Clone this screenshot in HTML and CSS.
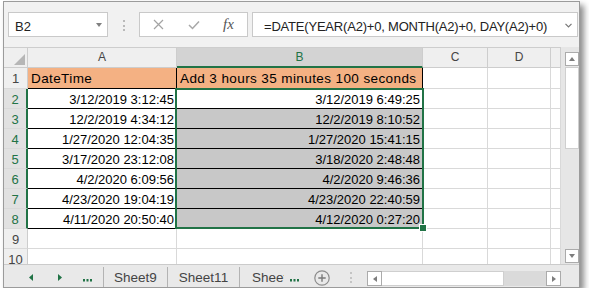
FILE: index.html
```html
<!DOCTYPE html>
<html>
<head>
  <title>Add hours minutes seconds</title>
  <link rel="stylesheet" href="styles.css">
</head>
<body>
  <div class="window">
    <div class="toolbar">
      <div class="namebox"><span>B2</span><span class="caret"></span></div>
      <div class="grip"><i></i><i></i><i></i></div>
      <div class="fxbox">
        <svg class="cancel" width="11" height="11" viewBox="0 0 11 11"><path d="M1 1L10 10M10 1L1 10" stroke="#a3a3a3" stroke-width="1.2" fill="none"/></svg>
        <svg class="enter" width="12" height="10" viewBox="0 0 12 10"><path d="M1 5L4.5 8.5L11 1.5" stroke="#a8a8a8" stroke-width="1.5" fill="none"/></svg>
        <span class="fx">fx</span>
      </div>
      <div class="formula">
        <span>=DATE(YEAR(A2)+0, MONTH(A2)+0, DAY(A2)+0)</span>
        <svg width="7" height="5" viewBox="0 0 7 5"><path d="M0.5 0.8L3.5 3.8L6.5 0.8" stroke="#777" stroke-width="1.2" fill="none"/></svg>
      </div>
    </div>

    <div class="sheet">
      <div class="grid">
        <div class="row head">
          <div class="corner"><svg width="11" height="11" viewBox="0 0 11 11"><path d="M11 0V11H0Z" fill="#b6b6b6"/></svg></div>
          <div>A</div>
          <div class="on">B</div>
          <div>C</div>
          <div>D</div>
          <div></div>
        </div>
        <div class="row row1">
          <div class="rh">1</div>
          <div class="dt title">DateTime</div>
          <div class="dt title">Add 3 hours 35 minutes 100 seconds</div>
          <div></div><div></div><div></div>
        </div>
        <div class="row">
          <div class="rh sel">2</div>
          <div class="dt num">3/12/2019 3:12:45</div>
          <div class="dt num">3/12/2019 6:49:25</div>
          <div></div><div></div><div></div>
        </div>
        <div class="row">
          <div class="rh sel">3</div>
          <div class="dt num">12/2/2019 4:34:12</div>
          <div class="dt num fill">12/2/2019 8:10:52</div>
          <div></div><div></div><div></div>
        </div>
        <div class="row">
          <div class="rh sel">4</div>
          <div class="dt num">1/27/2020 12:04:35</div>
          <div class="dt num fill">1/27/2020 15:41:15</div>
          <div></div><div></div><div></div>
        </div>
        <div class="row">
          <div class="rh sel">5</div>
          <div class="dt num">3/17/2020 23:12:08</div>
          <div class="dt num fill">3/18/2020 2:48:48</div>
          <div></div><div></div><div></div>
        </div>
        <div class="row">
          <div class="rh sel">6</div>
          <div class="dt num">4/2/2020 6:09:56</div>
          <div class="dt num fill">4/2/2020 9:46:36</div>
          <div></div><div></div><div></div>
        </div>
        <div class="row">
          <div class="rh sel">7</div>
          <div class="dt num">4/23/2020 19:04:19</div>
          <div class="dt num fill">4/23/2020 22:40:59</div>
          <div></div><div></div><div></div>
        </div>
        <div class="row">
          <div class="rh sel">8</div>
          <div class="dt num">4/11/2020 20:50:40</div>
          <div class="dt num fill">4/12/2020 0:27:20</div>
          <div></div><div></div><div></div>
        </div>
        <div class="row">
          <div class="rh">9</div>
          <div></div><div></div><div></div><div></div><div></div>
        </div>
        <div class="row">
          <div class="rh">10</div>
          <div></div><div></div><div></div><div></div><div></div>
        </div>

        <div class="selection"><span class="handle"></span></div>
      </div>

      <div class="vscroll">
        <div class="sbtn"><span class="tri up"></span></div>
        <div class="vthumb"></div>
        <div class="spacer"></div>
        <div class="sbtn"><span class="tri down"></span></div>
      </div>
    </div>

    <div class="tabbar">
      <div class="nav">
        <svg width="99" height="20" viewBox="0 0 99 20">
          <path d="M25 10.5L29 7V14Z" fill="#217346"/>
          <path d="M54 7V14L58 10.5Z" fill="#217346"/>
          <rect x="79" y="12" width="2" height="2.5" fill="#217346"/>
          <rect x="82.5" y="12" width="2" height="2.5" fill="#217346"/>
          <rect x="86" y="12" width="2" height="2.5" fill="#217346"/>
        </svg>
      </div>
      <div class="tab t9">Sheet9</div>
      <div class="tab t11">Sheet11</div>
      <div class="tab cut">Sheet12</div>
      <svg class="more" width="10" height="20" viewBox="0 0 10 20">
        <rect x="0" y="12" width="2" height="2.5" fill="#217346"/>
        <rect x="3.5" y="12" width="2" height="2.5" fill="#217346"/>
        <rect x="7" y="12" width="2" height="2.5" fill="#217346"/>
      </svg>
      <svg class="plus" width="16" height="16" viewBox="0 0 16 16">
        <circle cx="8" cy="8" r="7.2" stroke="#8c8c8c" stroke-width="1.2" fill="none"/>
        <path d="M8 4.3V11.7M4.3 8H11.7" stroke="#7a7a7a" stroke-width="1.4"/>
      </svg>
      <div class="grip tgrip"><i></i><i></i><i></i></div>
      <div class="hscroll">
        <div class="sbtn"><span class="tri left"></span></div>
        <div class="hthumb"></div>
        <div class="htrack"></div>
        <div class="sbtn"><span class="tri right"></span></div>
      </div>
    </div>
  </div>
</body>
</html>
```

FILE: styles.css
```css
body {
  margin: 0;
  background: #fff;
  font-family: "Liberation Sans", Arial, sans-serif;
}

.window {
  margin: 1px 0 0 3px;
  width: 577px;
  height: 287px;
  box-sizing: border-box;
  border: 1px solid #9b9b9b;
  background: #f1f1f1;
  box-shadow: 4px 4px 6px rgba(0, 0, 0, 0.45);
  display: flex;
  flex-direction: column;
  overflow: hidden;
}

/* formula bar */
.toolbar {
  height: 45px;
  flex: none;
  display: flex;
  align-items: flex-start;
  padding: 10px 0 0 4px;
  box-sizing: border-box;
}

.namebox,
.fxbox,
.formula {
  height: 25px;
  box-sizing: border-box;
  border: 1px solid #c9c9c9;
  background: #fff;
  display: flex;
  align-items: center;
}

.namebox {
  width: 100px;
  justify-content: space-between;
  padding: 4px 5px 0 6px;
  font-size: 13px;
  color: #222;
}

.caret {
  width: 0;
  height: 0;
  margin-top: -3px;
  border-top: 4px solid #808080;
  border-left: 3px solid transparent;
  border-right: 3px solid transparent;
}

.grip {
  width: 2px;
  margin: 8px 14px 0 15px;
  display: flex;
  flex-direction: column;
  gap: 2.5px;
}

.grip i {
  width: 2px;
  height: 2px;
  background: #b9b9b9;
}

.fxbox {
  width: 109px;
  padding-left: 13px;
}

.enter {
  margin-left: 24px;
}

.fx {
  margin-left: 23px;
  font-family: "Liberation Serif", "Times New Roman", serif;
  font-style: italic;
  font-size: 15px;
  color: #555;
}

.formula {
  flex: 1;
  margin: 0 1px 0 4px;
  justify-content: space-between;
  padding: 4px 5px 0 11px;
  font-size: 13px;
  letter-spacing: -0.2px;
  color: #222;
}

.formula svg {
  margin-top: -3px;
}

/* sheet grid */
.sheet {
  height: 217px;
  flex: none;
  display: flex;
}

.grid {
  position: relative;
  width: 557px;
  overflow: hidden;
  background: #fff;
}

.row {
  display: grid;
  grid-template-columns: 24px 149px 246px 65px 63px 10px;
  height: 20px;
}

.row > div {
  box-sizing: border-box;
  border-right: 1px solid #d9d9d9;
  border-bottom: 1px solid #d9d9d9;
  padding: 3px 3px 0;
  font-size: 13px;
  line-height: 16px;
  white-space: nowrap;
  overflow: hidden;
  color: #000;
}

.head {
  height: 20px;
  border-top: 1px solid #cdcdcd;
}

.head > div {
  background: #efefef;
  border-color: #cdcdcd;
  padding: 0;
  line-height: 19px;
  font-size: 12px;
  text-align: center;
  color: #444;
}

.head > div.on {
  background: #d3d3d3;
  color: #217346;
  border-bottom: 2px solid #217346;
}

.corner {
  display: flex;
  justify-content: flex-end;
  align-items: flex-end;
}

.head > .corner {
  padding: 0 2px 2px 0;
}

.corner svg {
  display: block;
}

.row1 {
  height: 21px;
}

.row > .rh {
  background: #efefef;
  border-right-color: #cdcdcd;
  border-bottom-color: #d9d9d9;
  padding: 3px 0 0;
  text-align: center;
  color: #444;
}

.row > .rh.sel {
  background: #e1e1e1;
  color: #217346;
  border-right: 2px solid #217346;
}

.row > .dt {
  border-right-color: #000;
  border-bottom-color: #000;
}

.row > .title {
  background: #f4b183;
  font-size: 13.5px;
  letter-spacing: 0.4px;
}

.row > .num {
  text-align: right;
  padding-right: 2px;
}

.row > .fill {
  background: #c8c8c8;
}

.selection {
  position: absolute;
  left: 171px;
  top: 41px;
  width: 249px;
  height: 141px;
  box-sizing: border-box;
  border: 2px solid #217346;
  pointer-events: none;
}

.handle {
  position: absolute;
  right: -5px;
  bottom: -5px;
  width: 8px;
  height: 8px;
  box-sizing: border-box;
  border: 1px solid #fff;
  background: #217346;
}

/* scroll bars */
.vscroll {
  width: 18px;
  background: #e6e6e6;
  display: flex;
  flex-direction: column;
  align-items: flex-end;
  padding: 5px 0 1px;
  box-sizing: border-box;
}

.sbtn {
  width: 14px;
  height: 14px;
  flex: none;
  box-sizing: border-box;
  border: 1px solid #ababab;
  background: #fff;
  display: flex;
  align-items: center;
  justify-content: center;
}

.vthumb {
  width: 14px;
  height: 82px;
  margin-top: 1px;
  box-sizing: border-box;
  border: 1px solid #cfcfcf;
  background: #fff;
}

.spacer {
  flex: 1;
}

.tri {
  width: 0;
  height: 0;
}

.tri.up {
  border-bottom: 4px solid #7d7d7d;
  border-left: 3.5px solid transparent;
  border-right: 3.5px solid transparent;
}

.tri.down {
  border-top: 4px solid #7d7d7d;
  border-left: 3.5px solid transparent;
  border-right: 3.5px solid transparent;
}

.tri.left {
  border-right: 4px solid #7d7d7d;
  border-top: 3.5px solid transparent;
  border-bottom: 3.5px solid transparent;
}

.tri.right {
  border-left: 4px solid #7d7d7d;
  border-top: 3.5px solid transparent;
  border-bottom: 3.5px solid transparent;
}

/* sheet tabs */
.tabbar {
  height: 23px;
  flex: none;
  box-sizing: border-box;
  border-top: 1px solid #cbcbcb;
  padding-top: 2px;
  background: #e9e9e9;
  display: flex;
  align-items: stretch;
}

.nav {
  width: 100px;
  box-sizing: border-box;
  border-right: 1px solid #b3b3b3;
}

.nav svg {
  display: block;
}

.tab {
  box-sizing: border-box;
  border-right: 1px solid #b3b3b3;
  display: flex;
  align-items: center;
  justify-content: center;
  font-size: 13.5px;
  color: #444;
  white-space: nowrap;
  overflow: hidden;
}

.t9 {
  width: 64px;
}

.t11 {
  width: 72px;
}

.tab.cut {
  width: 44px;
  border-right: none;
  justify-content: flex-start;
  padding-left: 12px;
}

.more {
  margin-left: 6px;
  flex: none;
}

.plus {
  margin: 3px 0 0 14px;
  flex: none;
}

.tgrip {
  margin: 5px 0 0 20px;
}

.tgrip i {
  background: #c4c4c4;
}

.hscroll {
  width: 194px;
  height: 15px;
  margin: 4px 0 0 15px;
  display: flex;
  background: #dadada;
}

.hscroll .sbtn {
  width: 15px;
  height: 15px;
}

.hthumb {
  width: 122px;
  box-sizing: border-box;
  border: 1px solid #cfcfcf;
  border-left: none;
  background: #fff;
}

.htrack {
  flex: 1;
}
```
